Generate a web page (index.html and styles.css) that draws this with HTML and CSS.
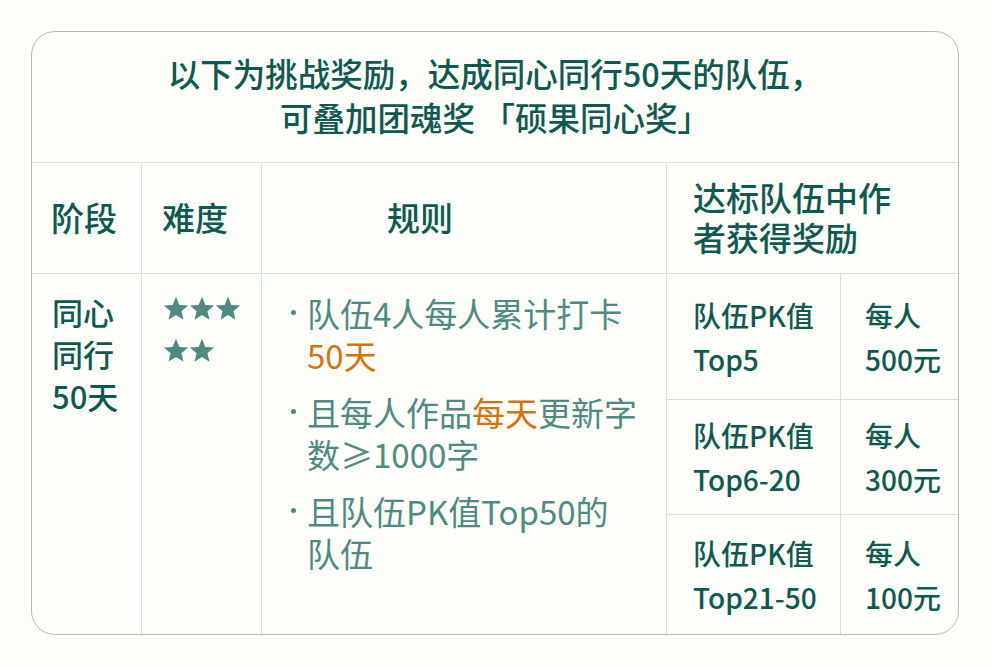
FILE: index.html
```html
<!DOCTYPE html>
<html lang="zh-CN">
<head>
<meta charset="utf-8">
<title>挑战奖励</title>
<link rel="stylesheet" href="styles.css">
</head>
<body>
<div class="card">
  <div class="grid">
    <div class="title">以下为挑战奖励，达成同心同行50天的队伍，<br>可叠加团魂奖 「硕果同心奖」</div>

    <div class="cell head c1">阶段</div>
    <div class="cell head c2">难度</div>
    <div class="cell head c3">规则</div>
    <div class="cell head c45"><span class="wrap6">达标队伍中作者获得奖励</span></div>

    <div class="cell stage">同心<br>同行<br>50天</div>
    <div class="cell diff">
      <div class="stars">
        <svg class="star" viewBox="0 0 24 24"><path d="M12 0.8l3.2 7.8 8.4.6-6.4 5.4 2 8.2L12 18.3l-7.2 4.5 2-8.2L.4 9.2l8.4-.6z"/></svg>
        <svg class="star" viewBox="0 0 24 24"><path d="M12 0.8l3.2 7.8 8.4.6-6.4 5.4 2 8.2L12 18.3l-7.2 4.5 2-8.2L.4 9.2l8.4-.6z"/></svg>
        <svg class="star" viewBox="0 0 24 24"><path d="M12 0.8l3.2 7.8 8.4.6-6.4 5.4 2 8.2L12 18.3l-7.2 4.5 2-8.2L.4 9.2l8.4-.6z"/></svg>
        <svg class="star" viewBox="0 0 24 24"><path d="M12 0.8l3.2 7.8 8.4.6-6.4 5.4 2 8.2L12 18.3l-7.2 4.5 2-8.2L.4 9.2l8.4-.6z"/></svg>
        <svg class="star" viewBox="0 0 24 24"><path d="M12 0.8l3.2 7.8 8.4.6-6.4 5.4 2 8.2L12 18.3l-7.2 4.5 2-8.2L.4 9.2l8.4-.6z"/></svg>
      </div>
    </div>
    <div class="cell rules">
      <ul class="rule-list">
        <li>队伍4人每人累计打卡<span class="hl">50天</span></li>
        <li>且每人作品<span class="hl">每天</span>更新字数≥1000字</li>
        <li>且队伍PK值Top50的队伍</li>
      </ul>
    </div>

    <div class="cell sub r1 left">队伍PK值<br>Top5</div>
    <div class="cell sub r1 right">每人<br>500元</div>
    <div class="cell sub r2 left">队伍PK值<br>Top6-20</div>
    <div class="cell sub r2 right">每人<br>300元</div>
    <div class="cell sub r3 left">队伍PK值<br>Top21-50</div>
    <div class="cell sub r3 right">每人<br>100元</div>
  </div>
</div>
</body>
</html>
```

FILE: styles.css
```css
html, body {
  margin: 0;
  padding: 0;
  background: #fdfdf9;
}
body {
  font-family: "Noto Sans CJK SC", "Noto Sans", sans-serif;
  color: #0e5a50;
}
.card {
  margin: 31px 0 0 31px;
  width: 928px;
  box-sizing: border-box;
  border: 1px solid #bababa;
  border-radius: 24px;
  overflow: hidden;
  background: #fdfdf9;
}
.grid {
  display: grid;
  grid-template-columns: 110px 120px 405px 174px 1fr;
  grid-template-rows: 131px 111px 126px 115px 119px;
}
.cell {
  box-sizing: border-box;
  border-right: 1px solid #d3e2df;
  border-bottom: 1px solid #d3e2df;
}
.title {
  grid-column: 1 / -1;
  border-bottom: 1px solid #d3e2df;
  display: flex;
  align-items: center;
  justify-content: center;
  text-align: center;
  font-size: 32.5px;
  line-height: 44px;
  font-weight: 500;
  padding-bottom: 4px;
  box-sizing: border-box;
}
.head {
  display: flex;
  align-items: center;
  font-size: 33px;
  font-weight: 500;
  line-height: 40px;
  padding-bottom: 2px;
}
.c1 { padding-left: 19px; }
.c2 { padding-left: 20px; }
.c3 { padding-left: 125px; }
.c45 {
  grid-column: 4 / 6;
  border-right: none;
  padding-left: 26px;
}
.wrap6 { width: 6.3em; }
.stage {
  grid-row: 3 / 6;
  border-bottom: none;
  padding: 17px 0 0 20px;
  font-size: 31px;
  font-weight: 500;
  line-height: 42px;
}
.diff {
  grid-row: 3 / 6;
  border-bottom: none;
  padding: 22px 0 0 21px;
}
.stars {
  display: flex;
  flex-wrap: wrap;
  width: 80px;
  row-gap: 17px;
}
.star {
  width: 26px;
  height: 25px;
  fill: #4e8a81;
  display: block;
}
.rules {
  grid-row: 3 / 6;
  border-bottom: none;
  padding: 18px 0 0 26px;
}
.rule-list {
  list-style: none;
  margin: 0;
  padding: 0;
  font-size: 33px;
  line-height: 42px;
  color: #4e8a81;
  width: 350px;
}
.rule-list li {
  position: relative;
  padding-left: 19px;
  margin-bottom: 15px;
}
.rule-list li::before {
  content: "";
  position: absolute;
  left: 3px;
  top: 18px;
  width: 5px;
  height: 5px;
  border-radius: 50%;
  background: #4e8a81;
}
.hl { color: #d6720c; }
.sub {
  display: flex;
  align-items: center;
  font-size: 28px;
  font-weight: 500;
  line-height: 44px;
}
.left { padding-left: 26px; }
.right { padding-left: 24px; border-right: none; }
.r3 { border-bottom: none; }
```
